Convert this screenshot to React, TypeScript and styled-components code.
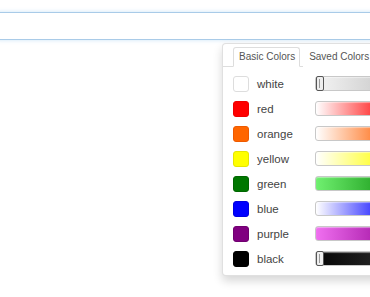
import styled, { createGlobalStyle } from "styled-components";

const GlobalStyle = createGlobalStyle`
  html, body {
    margin: 0;
    padding: 0;
    overflow: hidden;
    background: #fff;
    font-family: "Liberation Sans", Arial, sans-serif;
  }
`;

const Page = styled.div`
  position: relative;
  width: 370px;
  height: 297px;
  box-sizing: border-box;
  padding-top: 12px;
  overflow: hidden;
`;

const ColorInput = styled.input`
  display: block;
  box-sizing: border-box;
  margin: 0 -4px;
  width: calc(100% + 8px);
  height: 28px;
  border: 1px solid #a9cbe8;
  border-radius: 3px;
  box-shadow: 0 0 4px rgba(102, 175, 233, 0.35);
  outline: none;
`;

const Dropdown = styled.div`
  position: absolute;
  left: 222px;
  top: 43px;
  width: 230px;
  height: 233px;
  box-sizing: border-box;
  background: #fff;
  border: 1px solid rgba(0, 0, 0, 0.12);
  border-radius: 4px;
  box-shadow: 0 5px 10px rgba(0, 0, 0, 0.16);
`;

const TabBar = styled.div`
  display: flex;
  gap: 3px;
  padding: 3px 0 0 10px;
  border-bottom: 1px solid #ddd;
`;

const Tab = styled.div<{ $active?: boolean }>`
  height: 18px;
  line-height: 18px;
  padding: 0 4px 0 5px;
  margin-bottom: -1px;
  font-size: 10px;
  color: #555;
  background: #fff;
  border: 1px solid ${(p) => (p.$active ? "#ddd" : "transparent")};
  border-bottom-color: ${(p) => (p.$active ? "#fff" : "transparent")};
  border-radius: 3px 3px 0 0;
  white-space: nowrap;
`;

const List = styled.div`
  display: flex;
  flex-direction: column;
  padding: 4px 0 0 10px;
`;

const Row = styled.div`
  display: flex;
  align-items: center;
  height: 25px;
`;

const Swatch = styled.div<{ $color: string; $edge: string }>`
  width: 14px;
  height: 14px;
  background: ${(p) => p.$color};
  border: 1px solid ${(p) => p.$edge};
  border-radius: 3px;
  flex-shrink: 0;
`;

const Label = styled.span`
  width: 58px;
  margin-left: 8px;
  font-size: 11.5px;
  color: #444;
`;

const Track = styled.div<{ $from: string; $to: string }>`
  position: relative;
  width: 76px;
  height: 13px;
  border: 1px solid #c8c8c8;
  border-radius: 3px;
  background: linear-gradient(to right, ${(p) => p.$from}, ${(p) => p.$to});
  box-shadow: inset 0 1px 1px rgba(255, 255, 255, 0.45);
`;

const Handle = styled.div`
  position: absolute;
  left: 0;
  top: -1px;
  width: 6px;
  height: 13px;
  border: 1px solid #555;
  border-radius: 2px;
  background: #eee;
  &::after {
    content: "";
    position: absolute;
    left: 2px;
    top: 2px;
    width: 1px;
    height: 9px;
    background: #999;
  }
`;

type ColorRow = {
  name: string;
  color: string;
  edge: string;
  from: string;
  to: string;
  handle?: boolean;
};

const colors: ColorRow[] = [
  { name: "white", color: "#fff", edge: "#ddd", from: "#f4f4f4", to: "#c8c8c8", handle: true },
  { name: "red", color: "#f00", edge: "#e00", from: "#fff", to: "#ff0000" },
  { name: "orange", color: "#ff6600", edge: "#ee5a00", from: "#fff", to: "#ff6000" },
  { name: "yellow", color: "#ffff00", edge: "#e6e600", from: "#fff", to: "#ffff00" },
  { name: "green", color: "#007700", edge: "#006600", from: "#70f070", to: "#189818" },
  { name: "blue", color: "#0000ff", edge: "#0000e0", from: "#fff", to: "#0000ff" },
  { name: "purple", color: "#800080", edge: "#700070", from: "#f070f0", to: "#a010a0" },
  { name: "black", color: "#000", edge: "#000", from: "#050505", to: "#2a2a2a", handle: true },
];

export default function App() {
  return (
    <Page>
      <GlobalStyle />
      <ColorInput type="text" />
      <Dropdown>
        <TabBar>
          <Tab $active>Basic Colors</Tab>
          <Tab>Saved Colors</Tab>
        </TabBar>
        <List>
          {colors.map((c) => (
            <Row key={c.name}>
              <Swatch $color={c.color} $edge={c.edge} />
              <Label>{c.name}</Label>
              <Track $from={c.from} $to={c.to}>
                {c.handle && <Handle />}
              </Track>
            </Row>
          ))}
        </List>
      </Dropdown>
    </Page>
  );
}
